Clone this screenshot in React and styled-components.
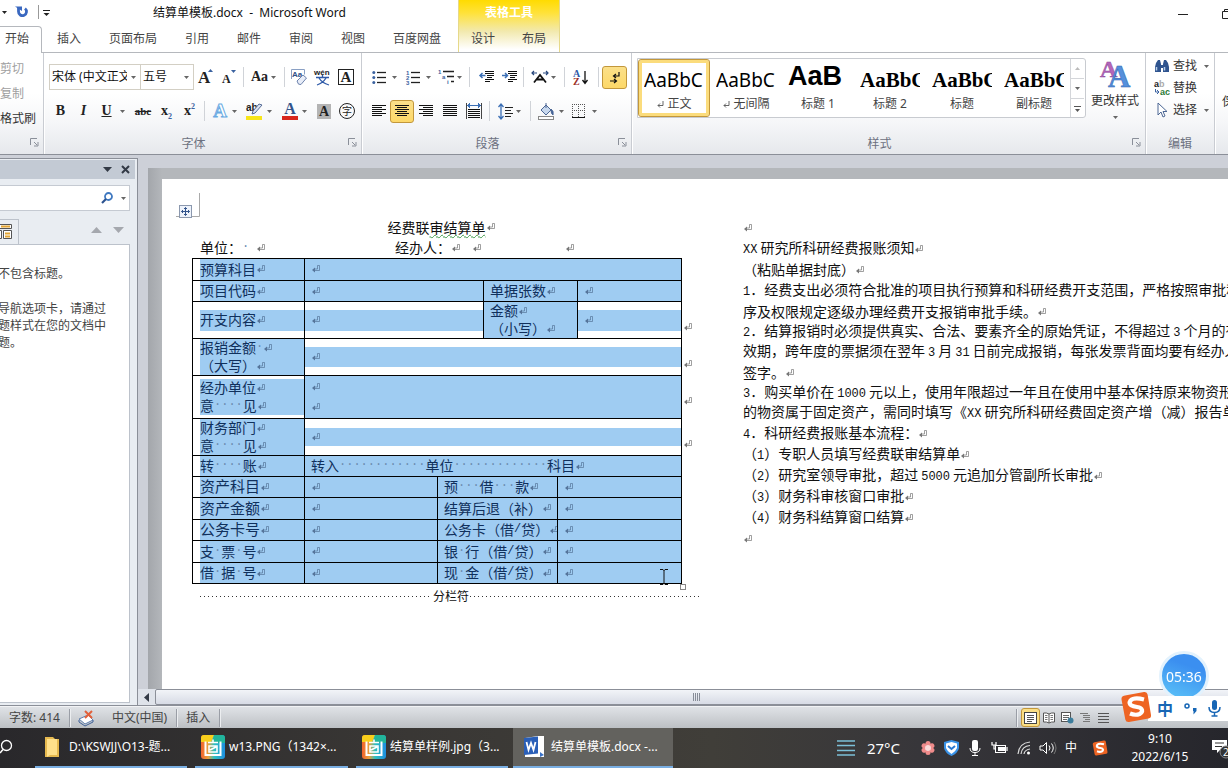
import React from "react";
import styled, { createGlobalStyle, css } from "styled-components";

const UI = '"Noto Sans", "Noto Sans CJK SC", sans-serif';
const SEL = "#9fccf2";

const Global = createGlobalStyle`
  * { box-sizing: border-box; }
  html, body { margin: 0; }
  body {
    font: 12px/16px ${UI};
    color: #333;
    background: #fff;
    overflow: hidden;
  }
  button, select, input {
    font: inherit;
    color: inherit;
    border: 0;
    padding: 0;
    margin: 0;
    background: none;
  }
  svg { display: block; flex: none; overflow: visible; }
`;

const Window = styled.div`
  display: flex;
  flex-direction: column;
  min-height: 100vh;
  overflow: hidden;
  white-space: nowrap;
`;

/* ---------- header ---------- */
const Header = styled.header`
  display: flex;
  height: 52px;
`;
const HeaderMain = styled.div`
  flex: none;
  width: 458px;
  display: flex;
  flex-direction: column;
`;
const TitleBar = styled.div`
  display: flex;
  align-items: center;
  height: 26px;
`;
const QuickAccess = styled.div`
  display: flex;
  align-items: center;
  gap: 8px;
  width: 153px;
  padding: 0 0 2px 2px;
`;
const Title = styled.h1`
  margin: 0;
  font-size: 12px;
  font-weight: 400;
  color: #111;
  white-space: pre;
`;
const Tabs = styled.nav`
  display: flex;
  height: 26px;
`;
const Tab = styled.button`
  height: 26px;
  padding: 0 14px;
  color: #444;
  ${(p) =>
    p.$active &&
    css`
      width: 42px;
      margin-right: 1px;
      padding: 0 12px 2px 5px;
      height: 27px;
      background: #fff;
      border: 1px solid #b5b8bd;
      border-width: 1px 1px 0 0;
      border-top-right-radius: 4px;
      position: relative;
    `}
`;
const ContextGroup = styled.div`
  flex: none;
  width: 102px;
  background: linear-gradient(#ffdb00, #ffe23a 25%, #f2e9ae 60%, #fff 95%);
  border: solid #e6d98a;
  border-width: 0 1px;
`;
const ContextTitle = styled.div`
  height: 26px;
  line-height: 26px;
  text-align: center;
  color: #fff;
  font-weight: 700;
`;
const ContextTabs = styled(Tabs)`
  button { padding: 0 14px 0 12px; }
  button + button { padding-left: 13px; }
`;
const WindowButtons = styled.div`
  flex: 1;
  display: flex;
  justify-content: flex-end;
  align-items: flex-start;
  gap: 34px;
  padding-top: 7px;
  overflow: hidden;
`;

/* ---------- ribbon ---------- */
const Ribbon = styled.div`
  display: flex;
  height: 103px;
  border-top: 1px solid #b5b8bd;
  border-bottom: 1px solid #8b8f98;
  background: linear-gradient(#fff 40%, #f5f6f8 70%, #e6e8ec);
  overflow: hidden;
`;
const Group = styled.section`
  flex: none;
  display: flex;
  flex-direction: column;
  position: relative;
  width: ${(p) => p.$w}px;
  border-right: 1px solid #c9ccd2;
  box-shadow: 1px 0 #fff;
`;
const GroupBody = styled.div`
  height: 75px;
  padding: ${(p) => p.$pad || "7px 0 0 5px"};
`;
const GroupLabel = styled.h2`
  display: flex;
  justify-content: center;
  align-items: center;
  margin: 0;
  height: 26px;
  padding-top: 5px;
  padding-right: ${(p) => (p.$centered ? 0 : 18)}px;
  font-size: 12px;
  font-weight: 400;
  color: #6c7180;
`;
const Launcher = styled.button`
  position: absolute;
  right: 4px;
  bottom: 7px;
`;
const ToolRow = styled.div`
  display: flex;
  align-items: center;
  height: 34px;
`;
const Tool = styled.button`
  flex: none;
  display: flex;
  align-items: center;
  justify-content: center;
  gap: ${(p) => p.$gap || 4}px;
  width: ${(p) => p.$w}px;
  height: 23px;
  font-family: "Liberation Serif", serif;
  color: #222;
  ${(p) =>
    p.$on &&
    css`
      background: linear-gradient(#fbe08a, #fdd868);
      border: 1px solid #c2973b;
      border-radius: 3px;
    `}
`;
const Sep = styled.i`
  flex: none;
  width: ${(p) => p.$w || 6}px;
  height: 20px;
  background: linear-gradient(#d0d3d8, #d0d3d8) center / 1px 100% no-repeat;
`;
const Glyph = styled.span`
  font-family: "Liberation Serif", serif;
  font-size: ${(p) => p.$size || 15}px;
  font-weight: 700;
  line-height: 16px;
  font-style: ${(p) => (p.$italic ? "italic" : "normal")};
  text-decoration: ${(p) => p.$deco || "none"};
  sub, sup { font-size: 8px; line-height: 0; color: #3b62a0; }
`;
const Combo = styled.label`
  position: relative;
  flex: none;
  display: flex;
  align-items: center;
  width: ${(p) => p.$w}px;
  height: 26px;
  margin-right: ${(p) => (p.$last ? 0 : -1)}px;
  border: 1px solid #d3cfc4;
  background: #fff;
  select {
    appearance: none;
    width: 100%;
    height: 24px;
    padding: 0 13px 0 2px;
    color: #111;
    outline: 0;
  }
  svg { position: absolute; right: 4px; top: 11px; }
`;
const ClipList = styled.div`
  display: flex;
  flex-direction: column;
  align-items: flex-start;
  gap: 9px;
  button { height: 16px; line-height: 16px; }
  button:not(:last-child) { color: #a0a0a0; }
`;

const Gallery = styled.div`
  display: flex;
  width: 449px;
  height: 60px;
  border: 1px solid #c8cbd0;
  border-radius: 0 3px 3px 0;
  background: #fff;
`;
const StyleCard = styled.button`
  flex: none;
  display: flex;
  flex-direction: column;
  width: 72px;
  height: 58px;
  padding: 3px 6px 0;
  color: #444;
  ${(p) =>
    p.$on &&
    css`
      border: 1px solid #c2973b;
      border-radius: 3px;
      box-shadow: inset 0 0 0 3px #fbdc7c;
      padding: 2px 5px 0;
    `}
`;
const Sample = styled.span`
  display: block;
  width: 100%;
  height: 34px;
  line-height: ${(p) => p.$lh || 36}px;
  overflow: hidden;
  color: #000;
  text-align: left;
  font-family: ${(p) => p.$font};
  font-size: ${(p) => p.$size}px;
  font-weight: ${(p) => p.$weight};
`;
const StyleName = styled.span`
  display: flex;
  align-items: center;
  align-self: center;
  gap: 3px;
  height: 16px;
`;
const GalleryScroll = styled.div`
  width: 14px;
  border-left: 1px solid #d4d6da;
  button {
    display: flex;
    flex-direction: column;
    gap: 2px;
    align-items: center;
    justify-content: center;
    width: 100%;
    height: 19px;
  }
  button + button { height: 20px; border-top: 1px solid #d4d6da; }
`;
const StylesBody = styled.div`
  display: flex;
  height: 75px;
  padding: 5px 0 0 5px;
`;
const BigButton = styled.button`
  display: flex;
  flex-direction: column;
  align-items: center;
  width: 58px;
  height: 66px;
  color: #333;
  svg + span { margin: 5px 0 7px; }
`;
const EditItem = styled.button`
  display: flex;
  align-items: center;
  gap: 3px;
  height: 22px;
  color: #333;
  svg + svg { margin-left: 4px; }
`;

/* ---------- workspace ---------- */
const Workspace = styled.div`
  flex: 1;
  display: flex;
  min-height: 551px;
  background: #cdd0d8;
`;
const NavPane = styled.aside`
  flex: none;
  display: flex;
  flex-direction: column;
  width: 138px;
  margin-top: 3px;
  padding: 1px 0 2px;
  border: solid #8b8f98;
  border-width: 1px 1px 1px 0;
  background: #e9edf2;
`;
const NavHead = styled.div`
  display: flex;
  justify-content: flex-end;
  align-items: center;
  gap: 9px;
  height: 19px;
  margin-right: 2px;
  padding-right: 5px;
  background: #c3cad4;
`;
const SearchBox = styled.label`
  display: flex;
  align-items: center;
  gap: 8px;
  height: 26px;
  margin: 6px 7px 0 0;
  padding-right: 3px;
  border: 1px solid #c5cad2;
  border-left: 0;
  background: #fff;
  input { flex: 1; width: 10px; height: 22px; outline: 0; }
`;
const NavTabs = styled.div`
  display: flex;
  align-items: center;
  height: 33px;
  padding: 4px 13px 0 0;
  gap: 11px;
`;
const NavTab = styled.button`
  align-self: flex-end;
  width: 19px;
  height: 25px;
  margin-right: auto;
  border: 1px solid #bcc2cb;
  border-width: 1px 1px 0 0;
`;
const NavBody = styled.div`
  flex: 1;
  margin-right: 7px;
  padding-top: 20px;
  border: 1px solid #bcc2cb;
  border-left: 0;
  background: #fff;
  color: #444;
  line-height: 17px;
  overflow: hidden;
  p { margin: 0 0 18px -2px; }
`;
const DocPane = styled.div`
  flex: 1;
  min-width: 0;
  display: flex;
  flex-direction: column;
  padding-top: 13px;
`;
const Canvas = styled.div`
  flex: 1;
  display: flex;
  margin-left: 10px;
  padding: 11px 0 0 14px;
  background: linear-gradient(90deg, #a3a6ab, #b4b7bb 14px);
`;
const Page = styled.main`
  position: relative;
  flex: 1;
  min-width: 0;
  display: flex;
  gap: 41px;
  padding: 39px 0 0 30px;
  background: #fff;
  color: #111;
  font: 14px/21px "Noto Sans CJK SC", sans-serif;
  text-spacing-trim: space-all;
  overflow: hidden;
`;
const Latin = styled.span`
  font-family: "Liberation Mono", monospace;
  font-size: 12px;
`;
const Column = styled.div`
  flex: none;
  width: 510px;
`;
const FormTitle = styled.h3`
  display: flex;
  justify-content: center;
  align-items: center;
  margin: 0;
  height: 20px;
  padding: 0 12px 3px 0;
  font-size: 14px;
  font-weight: 400;
  line-height: 20px;
`;
const Flagged = styled.span`
  text-decoration: underline wavy #3f9a4a 1px;
  text-underline-offset: 1px;
`;
const FormHead = styled.div`
  display: grid;
  grid-template-columns: 195px 77px 93px auto;
  align-items: center;
  height: 20px;
  padding: 0 0 2px 8px;
  line-height: 18px;
`;
const Line = styled.span`
  display: flex;
  align-items: center;
  ${(p) => p.$h && `height: ${p.$h}px;`}
`;
const Dots = styled.span`
  font-family: "Liberation Mono", monospace;
  font-size: 12px;
  color: #6d8cb0;
`;
const TableWrap = styled.div`
  position: relative;
  width: 504px;
`;
const Form = styled.table`
  width: 504px;
  table-layout: fixed;
  border-collapse: collapse;
  font-size: 14px;
  color: #10305c;
`;
const Cell = styled.td`
  height: ${(p) => p.$h}px;
  padding: 0 0 0 ${(p) => (p.$first ? 7 : 0)}px;
  border: 1px solid #000;
  vertical-align: middle;
  overflow: hidden;
`;
const RowEnd = styled.td`
  padding: ${(p) => (p.$low ? 12 : 6)}px 0 0 1px;
  border: 0;
`;
const Band = styled.div`
  display: flex;
  flex-direction: column;
  justify-content: center;
  height: ${(p) => p.$h}px;
  padding: 0 0 2px ${(p) => (p.$first ? 0 : 6)}px;
  background: ${SEL};
  line-height: 18px;
  font-size: ${(p) => p.$size || 14}px;
`;
const ResizeBox = styled.i`
  position: absolute;
  right: 10px;
  bottom: -6px;
  width: 6px;
  height: 6px;
  border: 1px solid #888;
  background: #fff;
`;
const MoveHandle = styled.div`
  position: absolute;
  left: 14px;
  top: 14px;
`;
const TextCursor = styled.div`
  position: absolute;
  left: 497px;
  top: 389px;
`;
const ColumnBreak = styled.div`
  display: flex;
  align-items: center;
  gap: 1px;
  height: 16px;
  margin: 4px 0 0 8px;
  font-size: 12px;
  line-height: 16px;
  &::before, &::after {
    content: "";
    flex: 1;
    height: 1px;
    background: repeating-linear-gradient(90deg, #333 0 1px, transparent 1px 4px);
  }
`;
const Notes = styled.div`
  flex: 1;
  min-width: 0;
  margin-top: -1px;
`;
const Note = styled.p`
  display: flex;
  align-items: center;
  margin: 0;
  height: ${(p) => (p.$cont ? 20 : 21)}px;
  white-space: pre;
`;
const HScroll = styled.div`
  display: flex;
  align-items: center;
  height: 17px;
  background: #dfe3ea;
  border-bottom: 1px solid #8b8f98;
`;
const ScrollArrow = styled.button`
  display: flex;
  justify-content: center;
  width: 17px;
`;
const Thumb = styled.div`
  flex: 1;
  display: flex;
  align-items: center;
  justify-content: center;
  height: 16px;
  margin-right: -10px;
  border: 1px solid #8b8f98;
  border-radius: 2px 0 0 2px;
  background: linear-gradient(#f2f4f8, #d7dbe5);
`;

/* ---------- status bar ---------- */
const StatusBar = styled.footer`
  display: flex;
  align-items: center;
  height: 22px;
  background: linear-gradient(#dfe2e6, #d0d3d7 45%, #bcc0c4);
  border-top: 1px solid #f2f3f5;
  color: #444;
`;
const StatusItem = styled.button`
  height: 20px;
  padding: 0 ${(p) => p.$right || 9}px 0 ${(p) => p.$left || 9}px;
`;
const StatusSep = styled.i`
  width: 1px;
  height: 18px;
  background: #9a9ea6;
  box-shadow: 1px 0 #eceef0;
`;
const Views = styled.div`
  display: flex;
  align-items: center;
  margin-left: auto;
  padding-right: 116px;
  i { margin-right: 4px; }
`;
const ViewButton = styled.button`
  display: flex;
  align-items: center;
  justify-content: center;
  width: ${(p) => (p.$on ? 19 : 18)}px;
  height: 19px;
  border: 1px solid ${(p) => (p.$on ? "#c2973b" : "transparent")};
  border-radius: 3px;
  background: ${(p) => (p.$on ? "#fbdf86" : "none")};
`;

/* ---------- taskbar ---------- */
const Taskbar = styled.div`
  display: flex;
  height: 40px;
  color: #fff;
  background: linear-gradient(90deg, #29282b, #383634 30%, #403e39 58%, #37363a 75%, #26262c);
`;
const Start = styled.button`
  width: 35px;
  padding-bottom: 2px;
`;
const Task = styled.button`
  display: flex;
  align-items: center;
  gap: ${(p) => p.$gap || 4}px;
  width: ${(p) => p.$w}px;
  margin-right: ${(p) => p.$mr || 8}px;
  padding-left: ${(p) => p.$pl || 6}px;
  border-bottom: 2px solid #79aee2;
  background: ${(p) => (p.$on ? "#63625e" : "none")};
`;
const Tray = styled.div`
  display: flex;
  align-items: center;
  margin-left: auto;
  height: 40px;
`;
const Weather = styled.button`
  display: flex;
  align-items: center;
  gap: 12px;
  margin-right: 18px;
  font-size: 15px;
`;
const TrayButton = styled.button`
  display: flex;
  align-items: center;
  justify-content: center;
  width: ${(p) => p.$w || 24}px;
  height: 40px;
`;
const Clock = styled.button`
  width: 88px;
  margin: 0 8px 0 0;
  line-height: 18px;
`;

/* ---------- overlays ---------- */
const Timer = styled.div`
  position: fixed;
  right: 19px;
  bottom: 67px;
  width: 50px;
  height: 50px;
  border: 3px solid #e3f2fd;
  border-radius: 50%;
  background: linear-gradient(20deg, #5cc4f8, #3b8ff0 70%);
  color: #fff;
  font-size: 14px;
  line-height: 45px;
  text-align: center;
`;
const InputBar = styled.div`
  position: fixed;
  right: 0;
  bottom: 47px;
  display: flex;
  align-items: center;
  gap: 11px;
  height: 25px;
  width: 80px;
  padding-left: 9px;
  background: #fff;
  color: #1766b5;
  font-size: 16px;
  font-weight: 700;
`;
const SogouBadge = styled.div`
  position: fixed;
  right: 76px;
  bottom: 45px;
`;

/* ---------- small drawings ---------- */
const Svg = ({ w, h = w, children, ...rest }) => (
  <svg width={w} height={h} viewBox={`0 0 ${w} ${h}`} fill="none" aria-hidden="true" {...rest}>
    {children}
  </svg>
);
const Caret = ({ c = "#666" }) => (
  <Svg w={5} h={3}><path d="M0 0h5L2.500 3z" fill={c} /></Svg>
);
const Ret = ({ c = "#55749a" }) => (
  <Svg w={9} h={9}>
    <path d="M1 6L4 3.500v5z" fill={c} />
    <path d="M4 5H6.500V1.500H8.500V6.500H4" stroke={c} strokeWidth="0.7" />
  </Svg>
);
const NameMark = () => (
  <Svg w={8} h={8}><path d="M7 1v4.500H2M4 3.500L2 5.500l2 2" stroke="#555" strokeWidth="0.9" /></Svg>
);
const LaunchIcon = () => (
  <Svg w={9}><path d="M.5 7V.5H7M4 4l3 3M8 4v4H4" stroke="#8a8f99" /></Svg>
);
const AlignIcon = ({ from = 0, to = 14 }) => (
  <Svg w={14} h={12} shapeRendering="crispEdges">
    {[0, 1, 2, 3, 4, 5].map((i) => (
      <path key={i} d={i % 2 ? `M${from} ${i * 2 + 0.5}H${to}` : `M0 ${i * 2 + 0.5}H14`} stroke="#111" />
    ))}
  </Svg>
);
const ListIcon = ({ marks }) => (
  <Svg w={15} h={15}>
    {[2.5, 7.5, 12.5].map((y, i) => (
      <g key={y}>
        {marks ? (
          <text x="0" y={y + 2.5} fontSize="6" fontWeight="700" fill="#3b62a0" fontFamily="Liberation Sans">{i + 1}</text>
        ) : (
          <circle cx="1.800" cy={y} r="1.500" fill="#3b62a0" />
        )}
        <path d={`M5 ${y}H14`} stroke="#222" strokeWidth="1.300" />
      </g>
    ))}
  </Svg>
);
const IndentIcon = ({ right }) => (
  <Svg w={16} h={14}>
    <path d="M6 1.500H15M6 3.500H15M8 5.500H15M8 7.500H13M6 9.500H15M6 11.500H11" stroke="#111" shapeRendering="crispEdges" />
    <path d={right ? "M0 5.500H5M3 3L5.500 5.500L3 8" : "M6.500 5.500H1M3.500 3L1 5.500L3.500 8"} stroke="#3b6fb5" strokeWidth="1.500" />
  </Svg>
);
const LetterA = ({ fill = "#222", stroke = "none", size = 17, w = 16, y = 13, children }) => (
  <Svg w={w} h={18}>
    {children}
    <text x={w / 2} y={y} textAnchor="middle" fontSize={size} fontWeight="700" fontFamily="Liberation Serif" fill={fill} stroke={stroke}>A</text>
  </Svg>
);
const PictureApp = ({ id }) => (
  <Svg w={24}>
    <defs>
      <linearGradient id={id} x1="0" y1="0" x2="1" y2="0">
        <stop offset="0" stopColor="#f2632e" /><stop offset=".3" stopColor="#e8a03c" />
        <stop offset=".55" stopColor="#2fc0c0" /><stop offset="1" stopColor="#1d8ee0" />
      </linearGradient>
    </defs>
    <rect width="24" height="24" rx="3" fill={`url(#${id})`} />
    <path d="M3 0H13L10 7H0V3q0-3 3-3z" fill="#f8cf1c" />
    <path d="M13 0h8q3 0 3 3v5H11z" fill="#22b59a" />
    <path d="M4.500 6.500V20h15V6.500" stroke="#fff" strokeWidth="2" />
    <path d="M7 7.500h10M12 4.500v3M8 11h8v6H8zM9 15l6-3" stroke="#fff" strokeWidth="1.600" />
  </Svg>
);
const SogouS = ({ w }) => (
  <svg width={w} height={w} viewBox="0 0 32 32" aria-hidden="true">
    <path d="M5 4.500L24 1q3-.5 3.600 2.500L31 24q.4 3-2.500 3.500L9 31q-3 .4-3.700-2.500L1.500 8.500Q1 5.200 5 4.500z" fill="#ee6423" />
    <path d="M24 8.500Q14 6 10.500 9.500C7.500 14 13 15.500 17 16c6 .8 6.500 5 2.500 7q-4 1.700-9.500-.5" fill="none" stroke="#fff" strokeWidth="4.200" />
  </svg>
);

/* Word document text: half-width runs are set in the narrow face. */
const Mixed = ({ children }) =>
  children.split(/([0-9A-Z/]+| )/).map((t, i) =>
    t === " " ? <Latin key={i}>{"\u2005"}</Latin> : i % 2 ? <Latin key={i}>{t}</Latin> : t
  );
const dot = (n) => <Dots>{"·".repeat(n)}</Dots>;

const C = ({ h, band, first, span, lines: ls, lh = 18, size }) => (
  <Cell $h={h} $first={first} colSpan={span}>
    <Band $h={band || h - 1} $first={first} $size={size}>
      {(ls || [""]).map((t, i) => (
        <Line key={i} $h={lh}>{t}<Ret /></Line>
      ))}
    </Band>
  </Cell>
);

const tabs = ["插入", "页面布局", "引用", "邮件", "审阅", "视图", "百度网盘"];
const sans = '"Noto Sans", sans-serif';
const serif = '"Liberation Serif", serif';
const styleCards = [
  { name: "正文", mark: true, on: true, font: sans, size: 19, weight: 400, text: "AaBbC" },
  { name: "无间隔", mark: true, font: sans, size: 19, weight: 400, text: "AaBbC" },
  { name: "标题 1", font: '"Liberation Sans", sans-serif', size: 27, weight: 700, lh: 28, text: "AaB" },
  { name: "标题 2", font: serif, size: 21, weight: 700, text: "AaBbC" },
  { name: "标题", font: serif, size: 21, weight: 700, text: "AaBbC" },
  { name: "副标题", font: serif, size: 21, weight: 700, text: "AaBbC" },
];
const notes = [
  { end: true, text: "" },
  { end: true, text: "XX 研究所科研经费报账须知" },
  { end: true, text: "（粘贴单据封底）" },
  { text: "1．经费支出必须符合批准的项目执行预算和科研经费开支范围，严格按照审批程" },
  { end: true, cont: true, text: "序及权限规定逐级办理经费开支报销审批手续。" },
  { text: "2．结算报销时必须提供真实、合法、要素齐全的原始凭证，不得超过 3 个月的有" },
  { cont: true, text: "效期，跨年度的票据须在翌年 3 月 31 日前完成报销，每张发票背面均要有经办人" },
  { end: true, cont: true, text: "签字。" },
  { text: "3．购买单价在 1000 元以上，使用年限超过一年且在使用中基本保持原来物资形态" },
  { cont: true, text: "的物资属于固定资产，需同时填写《XX 研究所科研经费固定资产增（减）报告单》" },
  { end: true, text: "4．科研经费报账基本流程：" },
  { end: true, text: "（1）专职人员填写经费联审结算单" },
  { end: true, text: "（2）研究室领导审批，超过 5000 元追加分管副所长审批" },
  { end: true, text: "（3）财务科审核窗口审批" },
  { end: true, text: "（4）财务科结算窗口结算" },
  { end: true, text: "" },
];
const accounts = [
  [21, "资产科目", 15, <>预{dot(3)}借{dot(3)}款</>],
  [22, "资产金额", 15, "结算后退（补）"],
  [21, "公务卡号", 15, <>公务卡（借<Latin>/</Latin>贷）</>],
  [22, <>支{dot(1)}票{dot(1)}号</>, 14, <>银{dot(1)}行（借<Latin>/</Latin>贷）</>],
  [21, <>借{dot(1)}据{dot(1)}号</>, 14, <>现{dot(1)}金（借<Latin>/</Latin>贷）</>],
];

function FontGroup() {
  return (
    <Group $w={318}>
      <GroupBody>
        <ToolRow>
          <Combo $w={92} aria-label="字体"><select defaultValue="a"><option value="a">宋体 (中文正文)</option></select><Caret /></Combo>
          <Combo $w={54} $last aria-label="字号"><select defaultValue="a"><option value="a">五号</option></select><Caret /></Combo>
          <Tool $w={23} aria-label="增大字体"><Svg w={16} h={18}><text x="0" y="15" fontSize="17" fontWeight="700" fontFamily="Liberation Serif" fill="#222">A</text><path d="M10 4l2.500-3L15 4z" fill="#3b62a0" /></Svg></Tool>
          <Tool $w={23} aria-label="缩小字体"><Svg w={16} h={18}><text x="1" y="15" fontSize="12" fontWeight="700" fontFamily="Liberation Serif" fill="#222">A</text><path d="M10 2l2.500 3L15 2z" fill="#3b62a0" /></Svg></Tool>
          <Sep />
          <Tool $w={35} $gap={3} aria-label="更改大小写"><Glyph $size={14}>Aa</Glyph><Caret /></Tool>
          <Sep />
          <Tool $w={24} aria-label="清除格式"><Svg w={17} h={17}><text x="1" y="8" fontSize="8" fontWeight="700" fontFamily="Liberation Sans" fill="#2e4f86">Aa</text><path d="M.5 10V.5h13v5" stroke="#8aa0c4" /><path d="M6 12l6-6 3.500 3-5.500 6.500q-3 1-4-3.500z" fill="#e8edf8" stroke="#6d83ad" /></Svg></Tool>
          <Tool $w={23} aria-label="拼音指南"><Svg w={17} h={18}><text x="0" y="7" fontSize="8" fontWeight="700" fontFamily="Liberation Sans" fill="#222">wén</text><path d="M2 9.500H15M8.500 7v2.500M12 10Q9 15 3 17M5 10Q8 15 15 17" stroke="#2e5aa8" strokeWidth="1.300" /></Svg></Tool>
          <Tool $w={23} aria-label="字符边框"><LetterA w={16} size={15} y={14}><rect x=".5" y="1.500" width="15" height="15" fill="#fff" stroke="#222" /></LetterA></Tool>
        </ToolRow>
        <ToolRow>
          <Tool $w={23}><Glyph $size={14}>B</Glyph></Tool>
          <Tool $w={23}><Glyph $size={14} $italic>I</Glyph></Tool>
          <Tool $w={36} $gap={8}><Glyph $size={14} $deco="underline">U</Glyph><Caret /></Tool>
          <Tool $w={24}><Glyph $size={11} $deco="line-through">abc</Glyph></Tool>
          <Tool $w={23}><Glyph $size={14}>x<sub>2</sub></Glyph></Tool>
          <Tool $w={23}><Glyph $size={14}>x<sup>2</sup></Glyph></Tool>
          <Sep />
          <Tool $w={35} aria-label="文本效果"><LetterA fill="#fff" stroke="#6aaae2" size={19} y={15} /><Caret /></Tool>
          <Tool $w={34} aria-label="突出显示"><Svg w={17} h={18}><rect y="14" width="16" height="4" fill="#f7e51a" /><text x="0" y="9" fontSize="10" fontWeight="700" fontFamily="Liberation Sans" fill="#222">ab</text><path d="M16 3L9 11l-3 1 1-3 6-7z" fill="#d9e2f2" stroke="#566c96" /></Svg><Caret /></Tool>
          <Tool $w={36} aria-label="字体颜色"><LetterA fill="#33548c" size={16} y={12}><rect y="14" width="16" height="4" fill="#d8261c" /></LetterA><Caret /></Tool>
          <Tool $w={23} aria-label="字符底纹"><LetterA w={14} size={14} y={14}><rect y="2" width="14" height="15" fill="#b4b4b4" /></LetterA></Tool>
          <Tool $w={23} aria-label="带圈字符"><Svg w={18}><circle cx="9" cy="9" r="7.500" stroke="#222" /><text x="9" y="12.500" textAnchor="middle" fontSize="10" fontFamily="Noto Sans CJK SC" fill="#222">字</text></Svg></Tool>
        </ToolRow>
      </GroupBody>
      <GroupLabel>字体</GroupLabel>
      <Launcher aria-label="字体对话框"><LaunchIcon /></Launcher>
    </Group>
  );
}

function ParagraphGroup() {
  return (
    <Group $w={270}>
      <GroupBody>
        <ToolRow>
          <Tool $w={34} $gap={5} aria-label="项目符号"><ListIcon /><Caret /></Tool>
          <Tool $w={34} $gap={5} aria-label="编号"><ListIcon marks /><Caret /></Tool>
          <Tool $w={30} $gap={2} aria-label="多级列表">
            <Svg w={17} h={16}><path d="M5 2.500H16M9 7.500H16M13 12.500H16" stroke="#222" strokeWidth="1.300" /><g fontSize="6" fontWeight="700" fontFamily="Liberation Sans" fill="#3b62a0"><text x="0" y="5">1</text><text x="4" y="10">a</text><text x="9" y="15">i</text></g></Svg><Caret />
          </Tool>
          <Sep $w={9} />
          <Tool $w={26} aria-label="减少缩进"><IndentIcon /></Tool>
          <Tool $w={20} aria-label="增加缩进"><IndentIcon right /></Tool>
          <Sep />
          <Tool $w={35} $gap={2} aria-label="中文版式"><Svg w={18} h={14}><path d="M3 12.500L9 5l6 7.500M6 9.500h6" stroke="#111" strokeWidth="1.800" /><path d="M1 3h5M12 3h5M3 1L1 3l2 2M15 1l2 2-2 2" stroke="#26467c" strokeWidth="1.200" /></Svg><Caret /></Tool>
          <Sep />
          <Tool $w={27} aria-label="排序"><Svg w={16} h={17}><g fontSize="10" fontWeight="700" fontFamily="Liberation Serif"><text x="0" y="8" fill="#2e5aa8">A</text><text x="0" y="16" fill="#9c2f2a">Z</text></g><path d="M12 2v12M9.500 11l2.500 3.500L14.500 11" stroke="#111" strokeWidth="1.300" /></Svg></Tool>
          <Sep $w={8} />
          <Tool $w={25} $on aria-label="显示编辑标记"><Svg w={12} h={13}><path d="M10 1v4H5M7 3L4.500 5 7 7M1 10h6M5 8l2.500 2L5 12" stroke="#111" strokeWidth="1.200" /></Svg></Tool>
        </ToolRow>
        <ToolRow>
          <Tool $w={23} aria-label="左对齐"><AlignIcon to={10} /></Tool>
          <Tool $w={24} $on aria-label="居中"><AlignIcon from={2} to={12} /></Tool>
          <Tool $w={24} aria-label="右对齐"><AlignIcon from={4} /></Tool>
          <Tool $w={24} aria-label="两端对齐"><AlignIcon /></Tool>
          <Tool $w={24} aria-label="分散对齐"><Svg w={16} h={16} shapeRendering="crispEdges"><path d="M.5 0v16M15.500 0v16" stroke="#444" /><path d="M2 2.500h12M4 .5l-2 2 2 2M12 .5l2 2-2 2" stroke="#3b6fb5" /><path d="M2 6.500h12M2 8.500h12M2 10.500h12M2 12.500h12M2 14.500h12" stroke="#111" /></Svg></Tool>
          <Sep />
          <Tool $w={34} $gap={2} aria-label="行距"><Svg w={16} h={17}><path d="M3 1v15M.5 4L3 1l2.500 3M.5 13L3 16l2.500-3" stroke="#3b6fb5" strokeWidth="1.300" /><path d="M7 4.500h8M7 7.500h6M7 10.500h8M7 13.500h6" stroke="#222" /></Svg><Caret /></Tool>
          <Sep $w={8} />
          <Tool $w={34} aria-label="底纹"><Svg w={17} h={17}><rect x=".5" y="13.500" width="15" height="3" fill="#fff" stroke="#888" /><path d="M3 7l5-5 5 5-5 5z" fill="#c8d8ee" stroke="#4c6794" /><path d="M8 5V0M13 6q3 2 2 6-2-1-2-5z" fill="#3b62a0" stroke="#4c6794" /></Svg><Caret /></Tool>
          <Tool $w={33} $gap={6} aria-label="边框"><Svg w={14}><path d="M.5 0v13M6.500 0v13M12.500 0v13M0 .5h13M0 6.500h13" stroke="#555" strokeDasharray="1 1" /><path d="M0 13.500h13" stroke="#111" /></Svg><Caret /></Tool>
        </ToolRow>
      </GroupBody>
      <GroupLabel>段落</GroupLabel>
      <Launcher aria-label="段落对话框"><LaunchIcon /></Launcher>
    </Group>
  );
}

export default function App() {
  return (
    <>
      <Global />
      <Window>
        <Header>
          <HeaderMain>
            <TitleBar>
              <QuickAccess>
                <Caret c="#222" />
                <Svg w={14}><path d="M3.500 2v4.500a4 4 0 1 0 6.500-3" stroke="#3a68c0" strokeWidth="2.800" /><path d="M0 1.500h7V6z" fill="#3a68c0" /></Svg>
                <Svg w={18} h={14}><path d="M1.500 0v14" stroke="#999" /><path d="M6 5.500h7" stroke="#222" /><path d="M6.500 8h6l-3 3z" fill="#222" /></Svg>
              </QuickAccess>
              <Title>{"结算单模板.docx  -  Microsoft Word"}</Title>
            </TitleBar>
            <Tabs>
              <Tab $active>开始</Tab>
              {tabs.map((t) => <Tab key={t}>{t}</Tab>)}
            </Tabs>
          </HeaderMain>
          <ContextGroup>
            <ContextTitle>表格工具</ContextTitle>
            <ContextTabs><Tab>设计</Tab><Tab>布局</Tab></ContextTabs>
          </ContextGroup>
          <WindowButtons>
            <button aria-label="最小化"><Svg w={10} h={12}><path d="M0 7.500h10" stroke="#222" /></Svg></button>
            <button aria-label="还原"><Svg w={6} h={12}><path d="M6 4.500H.5v7H6M2.500 4V2.500H6" stroke="#222" /></Svg></button>
          </WindowButtons>
        </Header>

        <Ribbon>
          <Group $w={44}>
            <GroupBody $pad="8px 0 0">
              <ClipList><button>剪切</button><button>复制</button><button>格式刷</button></ClipList>
            </GroupBody>
            <GroupLabel />
            <Launcher aria-label="剪贴板"><LaunchIcon /></Launcher>
          </Group>
          <FontGroup />
          <ParagraphGroup />
          <Group $w={514}>
            <StylesBody>
              <Gallery>
                {styleCards.map((s, i) => (
                  <StyleCard key={i} $on={s.on}>
                    <Sample $font={s.font} $size={s.size} $weight={s.weight} $lh={s.lh}>{s.text}</Sample>
                    <StyleName>{s.mark && <NameMark />}{s.name}</StyleName>
                  </StyleCard>
                ))}
                <GalleryScroll>
                  <button aria-label="上一行"><Svg w={5} h={3}><path d="M0 3h5L2.500 0z" fill="#bbb" /></Svg></button>
                  <button aria-label="下一行"><Caret /></button>
                  <button aria-label="其他"><Svg w={7} h={6}><path d="M0 .5h7" stroke="#555" /><path d="M1 3h5L3.500 6z" fill="#555" /></Svg></button>
                </GalleryScroll>
              </Gallery>
              <BigButton>
                <Svg w={30} h={30}>
                  <g fontFamily="Liberation Serif" fontWeight="700">
                    <text x="0" y="19" fontSize="24" fill="#b565b8" stroke="#8c4a9c" strokeWidth=".5">A</text>
                    <text x="8" y="29" fontSize="31" fill="#5590dc" stroke="#2f62ad" strokeWidth=".5">A</text>
                  </g>
                </Svg>
                <span>更改样式</span>
                <Caret />
              </BigButton>
            </StylesBody>
            <GroupLabel>样式</GroupLabel>
            <Launcher aria-label="样式窗格"><LaunchIcon /></Launcher>
          </Group>
          <Group $w={69}>
            <GroupBody $pad="2px 0 0 8px">
              <EditItem>
                <Svg w={16} h={14}><path d="M2 4L4 1h2l1 4v8H1V8zM14 4l-2-3h-2L9 5v8h6V8z" fill="#2f548f" /><path d="M6 6h4v3H6z" fill="#2f548f" /><path d="M2.500 8v3.500M10.500 8v3.500" stroke="#b8cdea" strokeWidth="1.500" /></Svg>
                查找<Caret />
              </EditItem>
              <EditItem>
                <Svg w={16} h={16}><g fontSize="9" fontWeight="700" fontFamily="Liberation Sans"><text x="0" y="7" fill="#222">a</text><text x="5" y="7" fill="#aaa">b</text><text x="6" y="15" fill="#2b7a35">ac</text></g><path d="M1.500 9v3h3M3 10l2 2-2 2" stroke="#3b62a0" /></Svg>
                替换
              </EditItem>
              <EditItem>
                <Svg w={16} h={16}><path d="M4 1v12l3-3 2 5 2-1-2-4.500h4z" fill="#fff" stroke="#4c6794" /></Svg>
                选择<Caret />
              </EditItem>
            </GroupBody>
            <GroupLabel $centered>编辑</GroupLabel>
          </Group>
          <Group $w={60}>
            <GroupBody $pad="41px 0 0 7px">保存到</GroupBody>
          </Group>
        </Ribbon>

        <Workspace>
          <NavPane>
            <NavHead>
              <Svg w={9} h={5}><path d="M0 0h9L4.500 5z" fill="#333a46" /></Svg>
              <Svg w={9}><path d="M1 1l7 7M8 1L1 8" stroke="#333a46" strokeWidth="2" /></Svg>
            </NavHead>
            <SearchBox aria-label="搜索文档">
              <input type="text" />
              <Svg w={12}><circle cx="7.500" cy="4.500" r="3.500" stroke="#3f78c0" strokeWidth="1.800" /><path d="M5 7L1 11" stroke="#2b528f" strokeWidth="2.200" /></Svg>
              <Caret />
            </SearchBox>
            <NavTabs>
              <NavTab aria-label="浏览标题">
                <Svg w={13} h={16}><path d="M0 .5h11.500v4H0M3.500 6.500h8v8h-8zM0 6.500h1.500v8H0" stroke="#555" fill="#fff" /><path d="M1 2.500h9M5 9.500h5M5 12.500h5" stroke="#e3a534" strokeWidth="2" /></Svg>
              </NavTab>
              <Svg w={11} h={6}><path d="M0 6h11L5.500 0z" fill="#a5a8ae" /></Svg>
              <Svg w={11} h={6}><path d="M0 0h11L5.500 6z" fill="#a5a8ae" /></Svg>
            </NavTabs>
            <NavBody>
              <p>不包含标题。</p>
              <p>导航选项卡，请通过<br />题样式在您的文档中<br />题。</p>
            </NavBody>
          </NavPane>

          <DocPane>
            <Canvas>
              <Page>
                <MoveHandle>
                  <Svg w={24} h={38}><path d="M23.500 0v23.500H0" stroke="#aaa" /><rect x="3.500" y="12.500" width="12" height="12" fill="#eef3fb" stroke="#8b98ae" /><path d="M9.500 14.500v8M5.500 18.500h8M8 16l1.500-1.500L11 16M8 21l1.500 1.500L11 21M7 17l-1.500 1.500L7 20M12 17l1.500 1.500L12 20" stroke="#33548c" /></Svg>
                </MoveHandle>
                <Column>
                  <FormTitle>经费联<Flagged>审结算单</Flagged><Ret c="#777" /></FormTitle>
                  <FormHead>
                    <Line>单位：{dot(1)}<Dots>{"\u00a0"}</Dots><Ret c="#777" /></Line>
                    <Line>经办人：<Ret c="#777" /></Line>
                    <Line><Ret c="#777" /></Line>
                    <Line><Ret c="#777" /></Line>
                  </FormHead>
                  <TableWrap>
                    <Form>
                      <colgroup>
                        {[112, 133, 46, 74, 20, 104, 15].map((w, i) => <col key={i} width={w} />)}
                      </colgroup>
                      <tbody>
                        <tr><C h={22} first lines={["预算科目"]} /><C h={22} span={5} /></tr>
                        <tr><C h={21} first lines={["项目代码"]} /><C h={21} span={2} /><C h={21} span={2} lines={["单据张数"]} /><C h={21} /></tr>
                        <tr>
                          <C h={37} band={21} first lines={["开支内容"]} />
                          <C h={37} band={21} span={2} />
                          <C h={37} span={2} lines={["金额", "（小写）"]} />
                          <C h={37} band={21} />
                          <RowEnd $low><Ret c="#777" /></RowEnd>
                        </tr>
                        <tr><C h={37} first lines={[<>报销金额{dot(1)}</>, "（大写）"]} /><C h={37} band={20} span={5} /><RowEnd $low><Ret c="#777" /></RowEnd></tr>
                        <tr><C h={43} band={36} first lines={["经办单位", <>意{dot(4)}见</>]} /><C h={43} span={5} lh={20} lines={["", ""]} /><RowEnd><Ret c="#777" /></RowEnd></tr>
                        <tr><C h={37} first lines={["财务部门", <>意{dot(4)}见</>]} /><C h={37} band={18} span={5} /><RowEnd $low><Ret c="#777" /></RowEnd></tr>
                        <tr><C h={21} first lines={[<>转{dot(4)}账</>]} /><C h={21} span={5} lines={[<>转入{dot(12)}单位{dot(13)}科目</>]} /></tr>
                        {accounts.map(([h, a, size, b], i) => (
                          <tr key={i}><C h={h} first size={size} lines={[a]} /><C h={h} /><C h={h} span={2} lines={[b]} /><C h={h} span={2} /></tr>
                        ))}
                      </tbody>
                    </Form>
                    <ResizeBox />
                  </TableWrap>
                  <ColumnBreak>分栏符</ColumnBreak>
                </Column>
                <Notes>
                  {notes.map((n, i) => (
                    <Note key={i} $cont={n.cont}><span><Mixed>{n.text}</Mixed></span>{n.end && <Ret c="#777" />}</Note>
                  ))}
                </Notes>
                <TextCursor><Svg w={10} h={18}><path d="M1 1.500h3l1 1 1-1h3M5 2v14M1 16.500h3l1-1 1 1h3" stroke="#111" /></Svg></TextCursor>
              </Page>
            </Canvas>
            <HScroll>
              <ScrollArrow aria-label="向左滚动"><Svg w={5} h={9}><path d="M5 0v9L0 4.500z" fill="#333a46" /></Svg></ScrollArrow>
              <Thumb><Svg w={8} h={8}><path d="M.5 0v8M2.500 0v8M4.500 0v8M6.500 0v8" stroke="#888d98" /></Svg></Thumb>
            </HScroll>
          </DocPane>
        </Workspace>

        <StatusBar>
          <StatusItem>字数: 414</StatusItem>
          <StatusSep />
          <StatusItem $left={8} $right={8} aria-label="校对"><Svg w={17} h={16}><path d="M1 9l6 5 8-4-5-5z" fill="#fff" stroke="#5f7fae" /><path d="M1 10v2l6 4 8-4v-2" stroke="#3f6199" /><path d="M7 1l7 7M14 1L7 8" stroke="#e2603a" strokeWidth="2" /></Svg></StatusItem>
          <StatusItem>中文(中国)</StatusItem>
          <StatusSep />
          <StatusItem>插入</StatusItem>
          <StatusSep />
          <Views>
            <StatusSep />
            <ViewButton $on aria-label="页面视图"><Svg w={13} h={12} shapeRendering="crispEdges"><rect x=".5" y=".5" width="12" height="11" fill="#fff" stroke="#444" /><path d="M3 3.500h7M3 5.500h7M3 7.500h7M3 9.500h5" stroke="#555" /></Svg></ViewButton>
            <ViewButton aria-label="阅读版式"><Svg w={12} h={12}><path d="M6 2Q3.500.5.500 1v9q3-.5 5.500 1 2.500-1.500 5.500-1V1Q8.500.5 6 2zM6 2v9" fill="#fff" stroke="#555" /><path d="M2 3.500h2.500M2 5.500h2.500M2 7.500h2.500M7.500 3.500H10M7.500 5.500H10M7.500 7.500H10" stroke="#777" /></Svg></ViewButton>
            <ViewButton aria-label="Web 版式"><Svg w={13} h={12}><rect x=".5" y=".5" width="9" height="9" fill="#fff" stroke="#555" /><path d="M2 3.500h6M2 5.500h6M2 7.500h4" stroke="#666" /><circle cx="9.500" cy="8.500" r="3" fill="#3c7d9c" /></Svg></ViewButton>
            <ViewButton aria-label="大纲视图"><Svg w={10} h={10} shapeRendering="crispEdges"><path d="M0 .5h8M3 2.500h7M3 4.500h7M5 6.500h5M3 8.500h7" stroke="#777" /></Svg></ViewButton>
            <ViewButton aria-label="草稿"><Svg w={11} h={10} shapeRendering="crispEdges"><path d="M0 .5h11M0 3.500h11M0 6.500h11M0 9.500h11" stroke="#555" /></Svg></ViewButton>
          </Views>
        </StatusBar>

        <Taskbar>
          <Start aria-label="搜索"><Svg w={13} h={14}><circle cx="6.500" cy="5.500" r="5" stroke="#fff" strokeWidth="1.300" /><path d="M3 9.500L0 13" stroke="#fff" strokeWidth="1.500" /></Svg></Start>
          <Task $w={152} $gap={9} $pl={9}>
            <Svg w={16} h={20}><path d="M1 0h8l2 2h4v18H1z" fill="#e6b94f" /><path d="M3 2l10 0v16H6l-3 2z" fill="#ffe08a" /></Svg>
            {"D:\\KSWJJ\\O13-题..."}
          </Task>
          <Task $w={153}><PictureApp id="pa" />w13.PNG（1342×...</Task>
          <Task $w={152} $mr={5}><PictureApp id="pb" />结算单样例.jpg（3...</Task>
          <Task $w={160} $on $pl={11} $gap={6}>
            <Svg w={21} h={22}><path d="M1 2L14 0h6v21H1z" fill="#fff" /><path d="M0 2l14-1.500v17L0 19z" fill="#2a5fb8" /><path d="M2.500 6l2 8L7 7l2.500 7 2-8" stroke="#fff" strokeWidth="1.800" /><path d="M16 16l4 3-4 2z" fill="#3a72c8" /></Svg>
            结算单模板.docx -...
          </Task>
          <Tray>
            <Weather>
              <Svg w={18} h={16}><path d="M0 1h18M0 5.500h18M0 10.500h18M0 15h18" stroke="#7cc0d8" strokeWidth="1.400" /></Svg>
              27°C
            </Weather>
            <TrayButton $w={20} aria-label="通知程序"><Svg w={14}>{[0, 60, 120, 180, 240, 300].map((a) => <circle key={a} cx="7" cy="2.500" r="2.500" fill="#f08c8c" transform={`rotate(${a} 7 7)`} />)}<circle cx="7" cy="7" r="3" fill="#fcdada" /></Svg></TrayButton>
            <TrayButton $w={26} aria-label="安全"><Svg w={15} h={16}><path d="M7.500 0L15 2v6q-1 5-7.500 8Q1 13 0 8V2z" fill="#3a93e8" /><path d="M7.500 2L13 3.500V8q-1 3-5.500 6Q3 11 2 8V3.500z" fill="#fff" /><path d="M4 6l3.500 3L11 6" stroke="#2878d0" strokeWidth="2" /></Svg></TrayButton>
            <TrayButton $w={22} aria-label="麦克风"><Svg w={12} h={16}><rect x="3" width="6" height="11" rx="2" fill="#fff" /><path d="M1 8q0 4.500 5 4.500T11 8M6 12v3.500M3 15.500h6" stroke="#fff" /></Svg></TrayButton>
            <TrayButton $w={26} aria-label="电池"><Svg w={17} h={12}><rect x="4.500" y="3.500" width="10" height="7" stroke="#fff" /><rect x="7" y="5" width="7" height="4" fill="#fff" /><path d="M16 5v4M1 0v3h4V0M3 3v4h2" stroke="#fff" strokeWidth="1.200" /></Svg></TrayButton>
            <TrayButton $w={23} aria-label="网络"><Svg w={14}><path d="M1 13Q2 2 13 1M4 13q1-8 9-8.500M7 13q.5-4 6-5" stroke="#ddd" strokeWidth="1.200" /><circle cx="11.500" cy="12" r="1.500" fill="#fff" /></Svg></TrayButton>
            <TrayButton $w={24} aria-label="音量"><Svg w={17} h={14}><path d="M1 5h3l3.500-3.500v11L4 9H1zM10 4.500q2 2.500 0 5M12.500 2.500q3.500 4.500 0 9" stroke="#fff" /><path d="M15 1q4 6 0 12" stroke="#777" /></Svg></TrayButton>
            <TrayButton $w={24}>中</TrayButton>
            <TrayButton $w={33} aria-label="搜狗输入法"><SogouS w={16} /></TrayButton>
            <Clock>9:10<br />2022/6/15</Clock>
            <TrayButton $w={16} aria-label="通知中心"><Svg w={16} h={20}><path d="M0 2h15v10H8l-3 3v-3H0z" fill="#fff" /><path d="M3 5h9M3 8.500h7" stroke="#333" /><circle cx="14" cy="14" r="6" fill="#333" stroke="#888" /><text x="11" y="18" fontSize="10" fill="#fff" fontFamily="Open Sans">2</text></Svg></TrayButton>
          </Tray>
        </Taskbar>

        <Timer>05:36</Timer>
        <InputBar><span>中</span>
          <Svg w={13} h={14}><circle cx="3" cy="4" r="2" stroke="#1766b5" strokeWidth="1.500" /><path d="M9 6h3.500v3L9.500 12.500V9H9z" fill="#1766b5" /></Svg>
          <Svg w={13} h={17}><rect x="4" width="5" height="10" rx="2.500" fill="#1766b5" /><path d="M1 7q0 5.500 5.500 5.500T12 7M6.500 12v4M3.500 16h6" stroke="#1766b5" strokeWidth="1.500" /></Svg>
        </InputBar>
        <SogouBadge><SogouS w={32} /></SogouBadge>
      </Window>
    </>
  );
}
